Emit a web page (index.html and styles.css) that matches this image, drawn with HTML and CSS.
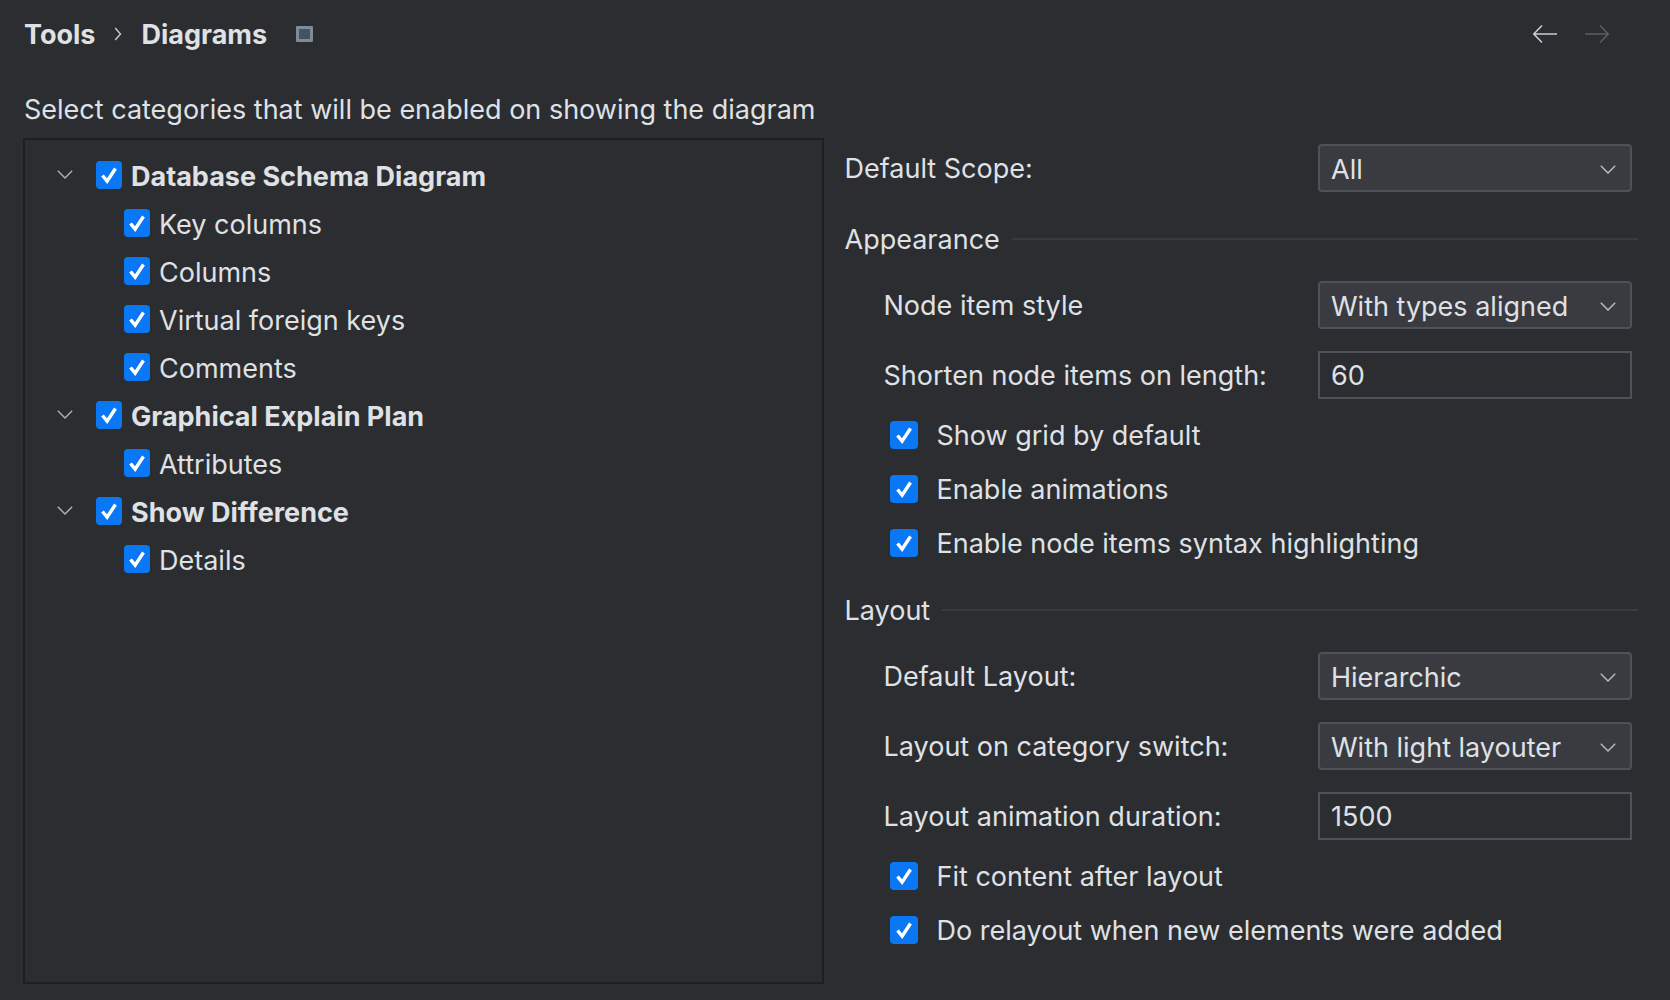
FILE: index.html
```html
<!DOCTYPE html>
<html lang="en">
<head>
<meta charset="utf-8">
<title>Tools - Diagrams</title>
<link rel="stylesheet" href="styles.css">
</head>
<body>
<svg class="defs" width="0" height="0" aria-hidden="true">
  <symbol id="check" viewBox="0 0 26 28"><path d="M6.5 14.5l4.6 5.6L19.5 7.5" fill="none" stroke="#fff" stroke-width="3.4"/></symbol>
  <symbol id="chev" viewBox="0 0 16 9"><path d="M.8.8L8 8l7.2-7.2" fill="none" stroke="currentColor" stroke-width="1.5"/></symbol>
</svg>
<main class="page">
  <header class="crumbs">
    <span class="crumb">Tools</span>
    <svg class="sep-chev" width="8" height="14" viewBox="0 0 8 14"><path d="M1.2 1l5.3 6-5.3 6" fill="none" stroke="#c9ccd2" stroke-width="1.4"/></svg>
    <span class="crumb">Diagrams</span>
    <span class="window-icon"></span>
    <span class="nav">
      <svg width="26" height="20" viewBox="0 0 26 20"><path d="M25 10H2M10 1.5L1.8 10l8.2 8.5" fill="none" stroke="#c9ccd2" stroke-width="1.6"/></svg>
      <svg width="26" height="20" viewBox="0 0 26 20"><path d="M1 10h23M16 1.5L24.2 10 16 18.5" fill="none" stroke="#5c5e63" stroke-width="1.6"/></svg>
    </span>
  </header>
  <p class="desc">Select categories that will be enabled on showing the diagram</p>
  <div class="columns">
    <section class="tree">
      <div class="row top"><svg class="tw"><use href="#chev"/></svg><span class="cb"><svg><use href="#check"/></svg></span><b>Database Schema Diagram</b></div>
      <div class="row child"><span class="cb"><svg><use href="#check"/></svg></span><span>Key columns</span></div>
      <div class="row child"><span class="cb"><svg><use href="#check"/></svg></span><span>Columns</span></div>
      <div class="row child"><span class="cb"><svg><use href="#check"/></svg></span><span>Virtual foreign keys</span></div>
      <div class="row child"><span class="cb"><svg><use href="#check"/></svg></span><span>Comments</span></div>
      <div class="row top"><svg class="tw"><use href="#chev"/></svg><span class="cb"><svg><use href="#check"/></svg></span><b>Graphical Explain Plan</b></div>
      <div class="row child"><span class="cb"><svg><use href="#check"/></svg></span><span>Attributes</span></div>
      <div class="row top"><svg class="tw"><use href="#chev"/></svg><span class="cb"><svg><use href="#check"/></svg></span><b>Show Difference</b></div>
      <div class="row child"><span class="cb"><svg><use href="#check"/></svg></span><span>Details</span></div>
    </section>
    <section class="form">
      <div class="field scope"><label>Default Scope:</label><div class="select">All<svg><use href="#chev"/></svg></div></div>
      <div class="group"><span>Appearance</span><i></i></div>
      <div class="field in first"><label>Node item style</label><div class="select">With types aligned<svg><use href="#chev"/></svg></div></div>
      <div class="field in"><label>Shorten node items on length:</label><div class="input">60</div></div>
      <div class="opts">
        <div class="opt"><span class="cb wide"><svg><use href="#check"/></svg></span>Show grid by default</div>
        <div class="opt"><span class="cb wide"><svg><use href="#check"/></svg></span>Enable animations</div>
        <div class="opt"><span class="cb wide"><svg><use href="#check"/></svg></span>Enable node items syntax highlighting</div>
      </div>
      <div class="group second"><span>Layout</span><i></i></div>
      <div class="field in first"><label>Default Layout:</label><div class="select">Hierarchic<svg><use href="#chev"/></svg></div></div>
      <div class="field in"><label>Layout on category switch:</label><div class="select">With light layouter<svg><use href="#chev"/></svg></div></div>
      <div class="field in"><label>Layout animation duration:</label><div class="input">1500</div></div>
      <div class="opts">
        <div class="opt"><span class="cb wide"><svg><use href="#check"/></svg></span>Fit content after layout</div>
        <div class="opt"><span class="cb wide"><svg><use href="#check"/></svg></span>Do relayout when new elements were added</div>
      </div>
    </section>
  </div>
</main>
</body>
</html>
```

FILE: styles.css
```css
* { box-sizing: border-box; }
html, body { margin: 0; height: 100%; }
body {
  background: #2b2d30;
  color: #dfe1e5;
  font-family: Inter, "Liberation Sans", sans-serif;
  font-size: 27px;
  overflow: hidden;
}
.defs { display: block; }
.page { width: 1670px; height: 1000px; padding: 0 32px 0 24px; }
.crumbs { height: 68px; display: flex; align-items: center; }
.crumb { font-weight: 700; }
.sep-chev { margin: 0 19px 0 19px; }
.window-icon {
  width: 17px; height: 16px; margin-left: 29px;
  background: #46535f; border: 3px solid #7d8c9a; border-radius: 1px;
}
.nav { margin-left: auto; display: flex; gap: 26px; margin-right: 28px; }
.desc { margin: 0; height: 70px; line-height: 84px; }
.columns { display: flex; }
.tree {
  width: 801px; height: 846px; margin-left: -1px;
  border: 2px solid #1e1f22;
  padding: 12px 0 0 32px;
}
.row { height: 48px; display: flex; align-items: center; }
.child { padding-left: 67px; }
.tw { width: 16px; height: 9px; color: #a8abb1; margin-right: 23px; margin-top: -4px; }
.cb {
  width: 26px; height: 28px; background: #0a78f5; border-radius: 4px;
  display: inline-flex; flex: none; margin-right: 9px; margin-top: -3px;
}
.cb svg { width: 100%; height: 100%; }
.cb.wide { width: 28px; margin: 0 19px 0 0; }
.form { margin-left: 21px; width: 794px; }
.field { display: flex; align-items: center; justify-content: space-between; padding-right: 6px; }
.scope { height: 48px; margin-top: 6px; }
.in { padding-left: 39px; margin-top: 22px; }
.in.first { margin-top: 0; }
.select, .input {
  width: 314px; height: 48px; display: flex; align-items: center;
  padding-left: 11px; padding-top: 2px;
}
.select {
  background: #393b40; border: 2px solid #4e5157; border-radius: 4px;
  justify-content: space-between; padding-right: 14px;
}
.select svg { width: 16px; height: 9px; color: #b4b8bf; flex: none; }
.input { border: 2px solid #4e5157; padding-top: 0; }
.group { display: flex; align-items: center; gap: 12px; height: 48px; margin: 23px 0 18px; }
.group i { flex: 1; height: 2px; background: #393b40; }
.group.second { margin: 16px 0 18px; }
.opts { padding: 9px 0 0 45px; }
.opt { height: 54px; display: flex; align-items: center; }
```
